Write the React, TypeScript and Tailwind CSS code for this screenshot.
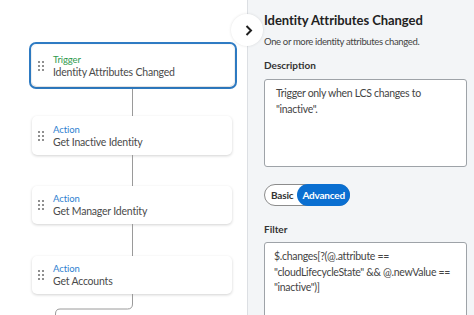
import React from "react";

const font = { fontFamily: "Lato, 'Noto Sans', sans-serif" };

function DragHandle() {
  return (
    <svg width="6" height="10" viewBox="0 0 6 10" className="shrink-0 text-[#6b6b6b]">
      {[1, 5, 9].map((y) =>
        [1, 5].map((x) => <circle key={`${x}-${y}`} cx={x} cy={y} r="1" fill="currentColor" />)
      )}
    </svg>
  );
}

function StepCard({
  kind,
  name,
  tone,
  height,
}: {
  kind: string;
  name: string;
  tone: string;
  height: string;
}) {
  return (
    <div
      className={`flex ${height} w-[200px] items-center gap-[9px] rounded-[5px] bg-white pl-[6px] shadow-[0_1px_3px_rgba(0,0,0,0.18)]`}
    >
      <DragHandle />
      <div className="flex flex-col leading-[12px]">
        <span className={`text-[9.5px] tracking-[-0.1px] ${tone}`}>{kind}</span>
        <span className="text-[10.5px] tracking-[-0.2px] text-[#4a4a4a]">{name}</span>
      </div>
    </div>
  );
}

function Connector({ h }: { h: string }) {
  return <div className={`ml-[100px] w-px ${h} bg-[#9a9a9a]`} />;
}

export default function App() {
  return (
    <div className="flex h-[315px] w-[474px] overflow-hidden bg-white" style={font}>
      {/* canvas */}
      <div className="flex w-[247px] shrink-0 flex-col pl-[29px] pt-[42px]">
        <div className="w-[208px] rounded-[7px] border-2 border-[#2f7cc4] p-px">
          <div className="flex h-[41px] w-[202px] items-center gap-[9px] rounded-[5px] bg-white pl-[6px] shadow-[0_1px_3px_rgba(0,0,0,0.18)]">
            <DragHandle />
            <div className="flex flex-col leading-[12px]">
              <span className="text-[9.5px] tracking-[-0.1px] text-[#2f9a4f]">Trigger</span>
              <span className="text-[10.5px] tracking-[-0.2px] text-[#4a4a4a]">Identity Attributes Changed</span>
            </div>
          </div>
        </div>
        <div className="pl-[3px]">
          <Connector h="h-[27px]" />
          <StepCard kind="Action" name="Get Inactive Identity" tone="text-[#2f7fd0]" height="h-[39px]" />
          <Connector h="h-[31px]" />
          <StepCard kind="Action" name="Get Manager Identity" tone="text-[#2f7fd0]" height="h-[38px]" />
          <Connector h="h-[32px]" />
          <StepCard kind="Action" name="Get Accounts" tone="text-[#2f7fd0]" height="h-[38px]" />
          <svg width="200" height="30" viewBox="0 0 200 30" className="block">
            <path d="M100.5 0 V10 Q100.5 15 95.5 15 H28 Q23.5 15 23.5 20 V30" fill="none" stroke="#9a9a9a" strokeWidth="1" />
          </svg>
        </div>
      </div>

      {/* side panel */}
      <div className="relative flex-1 border-l border-[#dcdfe3] bg-[#f3f5f7] pl-[16px] pr-[7px] pt-[10px]">
        <button className="absolute left-[-17px] top-[14px] flex h-[32px] w-[32px] items-center justify-center rounded-full bg-white shadow-[0_0_3px_rgba(0,0,0,0.12)]">
          <svg width="8" height="11" viewBox="0 0 8 11" className="ml-[4px]">
            <path d="M1.5 1 L6 5.5 L1.5 10" fill="none" stroke="#1f1f1f" strokeWidth="2" />
          </svg>
        </button>
        <h1 className="text-[13px] font-bold leading-[20px] tracking-[-0.05px] text-[#222]">Identity Attributes Changed</h1>
        <p className="mt-[5px] text-[9.5px] leading-[14px] tracking-[-0.35px] text-[#444]">
          One or more identity attributes changed.
        </p>
        <p className="mt-[9px] text-[10px] font-bold leading-[14px] text-[#333]">Description</p>
        <div className="mt-[7px] h-[88px] rounded-[3px] border border-[#9ea3a8] bg-white px-[11px] pt-[5px] text-[10.5px] leading-[16px] tracking-[-0.3px] text-[#444]">
          Trigger only when LCS changes to "inactive".
        </div>
        <div className="mt-[17px] flex h-[22px] w-[86px] items-center rounded-full border border-[#8c8c8c] bg-white text-[10px] font-bold tracking-[-0.2px]">
          <span className="pl-[6px] pr-[4px] text-[#333]">Basic</span>
          <span className="-mr-px flex h-[22px] flex-1 items-center justify-center rounded-full bg-[#0a6fd1] text-white">
            Advanced
          </span>
        </div>
        <p className="mt-[16px] text-[10px] font-bold leading-[14px] text-[#333]">Filter</p>
        <div className="mt-[6px] h-[100px] rounded-[3px] border border-[#9ea3a8] bg-white px-[9px] pt-[6px] text-[10.5px] leading-[15.5px] tracking-[-0.3px] text-[#444]">
          $.changes[?(@.attribute == "cloudLifecycleState" &amp;&amp; @.newValue == "inactive")]
        </div>
      </div>
    </div>
  );
}
